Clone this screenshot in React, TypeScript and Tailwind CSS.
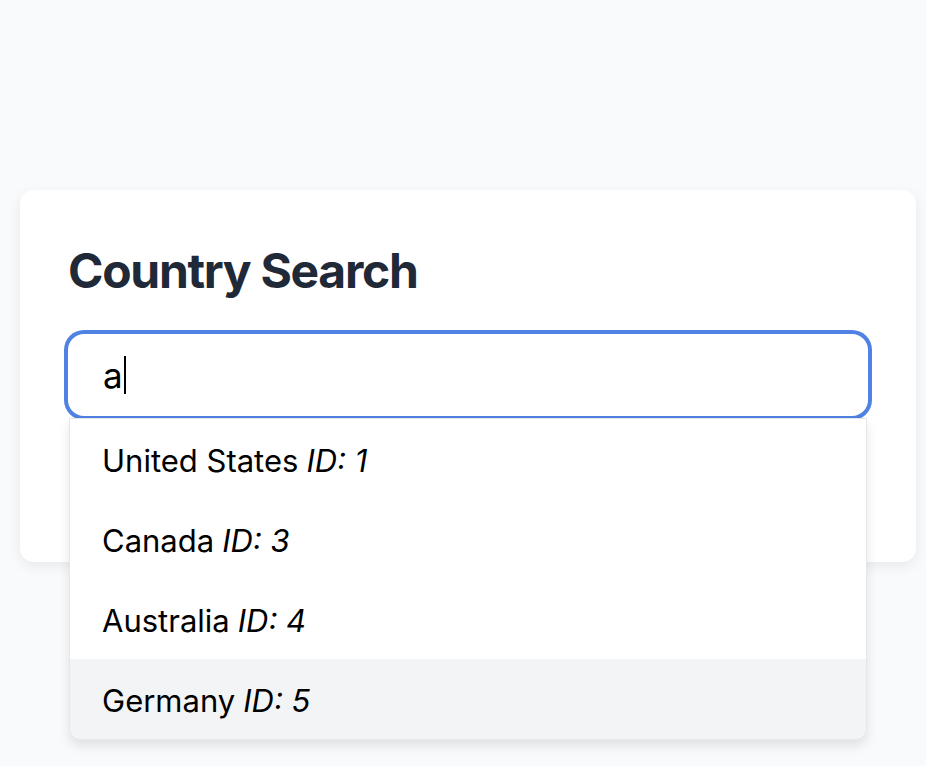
import React from 'react';

const countries = [
    { name: 'United States', id: 1 },
    { name: 'Canada', id: 3 },
    { name: 'Australia', id: 4 },
    { name: 'Germany', id: 5 },
];

export default function App() {
    const hovered = 5;

    return (
        <div className="min-h-screen bg-[#f9fafb] pt-[190px]" style={{ fontFamily: 'Inter, "Noto Sans", sans-serif' }}>
            <div className="ml-[20px] w-[896px] bg-white rounded-[14px] shadow-[0_4px_14px_rgba(0,0,0,0.07)] px-[48px] pt-[49px] pb-[48px]">
                <h1 className="text-[48px] leading-[64px] font-bold text-[#1f2937] tracking-[-1.3px]">Country Search</h1>
                <div className="relative mt-[31px]">
                    <div className="h-[82px] rounded-[16px] ring-4 ring-[#4f82e2] bg-white flex items-center pl-[35px] pr-8">
                        <span className="text-[35px] leading-none text-black">a</span>
                        <span className="w-[2px] h-[38px] bg-black ml-[1px]" />
                    </div>
                    <ul className="absolute left-px right-px top-[84px] bg-white border border-[#e5e7eb] rounded-b-[12px] shadow-[0_6px_12px_rgba(0,0,0,0.1)] overflow-hidden z-10">
                        {countries.map((c) => (
                            <li
                                key={c.id}
                                className={`h-[80px] flex items-center px-8 pt-[4px] text-[31px] text-black ${c.id === hovered ? 'bg-[#f3f4f6]' : 'bg-white'}`}
                            >
                                <span>{c.name}</span>
                                <em className="ml-[8px] italic">ID: {c.id}</em>
                            </li>
                        ))}
                    </ul>
                </div>
                <div className="h-[98px]" />
            </div>
        </div>
    );
}
